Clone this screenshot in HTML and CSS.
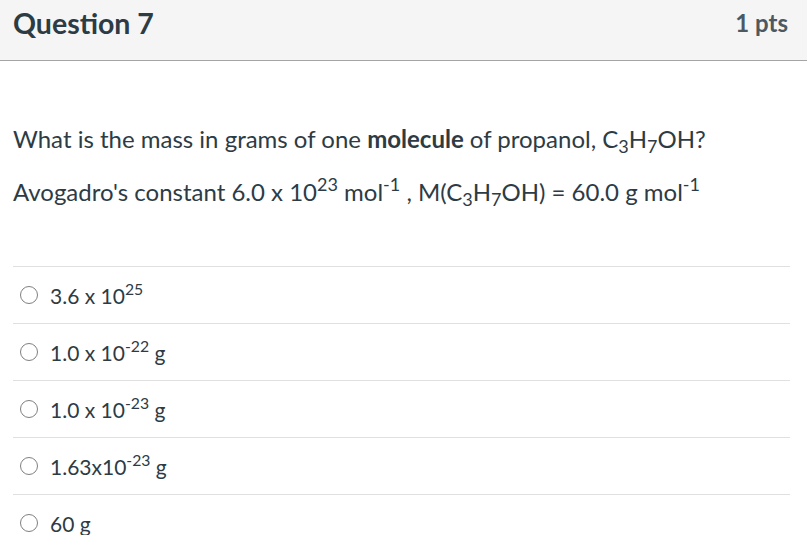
FILE: index.html
```html
<!DOCTYPE html>
<html lang="en">
<head>
<meta charset="utf-8">
<title>Question 7</title>
<link rel="stylesheet" href="styles.css">
</head>
<body>
<div class="question">
  <div class="header">
    <h2 class="title">Question 7</h2>
    <span class="points">1 pts</span>
  </div>
  <div class="content">
    <p class="text">What is the mass in grams of one <strong>molecule</strong> of propanol, C<sub>3</sub>H<sub>7</sub>OH?</p>
    <p class="text">Avogadro's constant 6.0 x 10<sup>23</sup> mol<sup>-1</sup> , M(C<sub>3</sub>H<sub>7</sub>OH) = 60.0 g mol<sup>-1</sup></p>
  </div>
  <div class="answers">
    <label class="answer"><span class="radio"></span><span class="atext">3.6 x 10<sup>25</sup></span></label>
    <label class="answer"><span class="radio"></span><span class="atext">1.0 x 10<sup>-22</sup> g</span></label>
    <label class="answer"><span class="radio"></span><span class="atext">1.0 x 10<sup>-23</sup> g</span></label>
    <label class="answer"><span class="radio"></span><span class="atext">1.63x10<sup>-23</sup> g</span></label>
    <label class="answer"><span class="radio"></span><span class="atext">60 g</span></label>
  </div>
</div>
</body>
</html>
```

FILE: styles.css
```css
* { box-sizing: border-box; }
html, body {
  margin: 0;
  padding: 0;
  background: #fff;
}
body {
  font-family: Lato, "Open Sans", sans-serif;
  color: #2d3b45;
}
.header {
  height: 61px;
  background: #f5f5f5;
  border-bottom: 1px solid #a5a5a5;
  display: flex;
  align-items: center;
  justify-content: space-between;
  padding: 0 19px 0 13px;
}
.title {
  margin: 0;
  font-size: 28.5px;
  font-weight: 700;
  color: #2d3b45;
  line-height: 1;
  position: relative;
  top: -7px;
}
.points {
  font-size: 24px;
  font-weight: 700;
  color: #4d5962;
  line-height: 1;
  position: relative;
  top: -7px;
}
.content {
  padding: 62px 13px 0;
}
.text {
  margin: 0 0 21px;
  font-size: 24px;
  line-height: 32px;
}
.text strong { font-weight: 700; }
sub, sup {
  font-size: 75%;
  line-height: 0;
  position: relative;
  vertical-align: baseline;
}
sub { bottom: -0.25em; }
sup { top: -0.55em; }
.answers {
  margin: 58px 17px 0 13px;
}
.answer {
  display: flex;
  align-items: center;
  height: 57px;
  border-top: 1px solid #e0e0e0;
  padding-left: 7px;
}
.radio {
  width: 18px;
  height: 18px;
  border: 1.5px solid #7f7f7f;
  border-radius: 50%;
  flex: none;
  margin-right: 12px;
}
.atext {
  font-size: 21px;
}
```
